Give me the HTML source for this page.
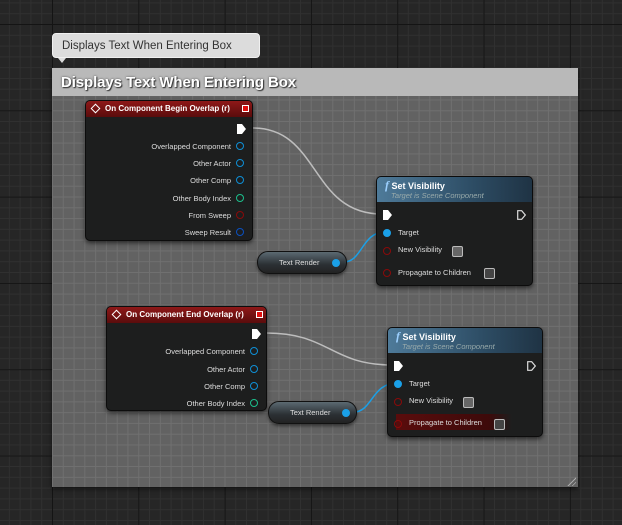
<!DOCTYPE html>
<html><head><meta charset="utf-8"><style>
*{margin:0;padding:0;box-sizing:border-box}
body{width:622px;height:525px;overflow:hidden;position:relative;font-family:"Liberation Sans",sans-serif;
background-color:#262626;
background-image:
linear-gradient(90deg,#141414 1px,transparent 1px),
linear-gradient(0deg,#141414 1px,transparent 1px),
linear-gradient(90deg,#303030 1px,transparent 1px),
linear-gradient(0deg,#303030 1px,transparent 1px);
background-size:86.3px 86.3px,86.3px 86.3px,10.79px 10.79px,10.79px 10.79px;
background-position:52px 25px,52px 25px,52px 25px,52px 25px;}
.abs{position:absolute}
.bubble{left:52px;top:33px;width:208px;height:25px;background:#dcdcdc;border-radius:4px;color:#333;font-size:11.5px;line-height:24px;padding-left:9px;border:1px solid #f0f0f0;white-space:nowrap}
.tri{left:58px;top:58px;width:0;height:0;border-left:4px solid transparent;border-right:4px solid transparent;border-top:5px solid #dcdcdc}
.comment{left:52px;top:68px;width:526px;height:419px;background-color:#626262;
background-image:linear-gradient(90deg,#707070 1px,transparent 1px),linear-gradient(0deg,#707070 1px,transparent 1px);
background-size:10.79px 10.79px,10.79px 10.79px;background-position:0 -43px,0 -43px;box-shadow:0 2px 4px rgba(0,0,0,.6)}
.chead{left:52px;top:68px;width:526px;height:28px;background:#b9b9b9;color:#fff;font-weight:bold;font-size:15px;line-height:29px;padding-left:9px;text-shadow:1px 1px 1px #333,0 0 2px #555;letter-spacing:-0.1px}
.node{position:absolute;background:#1d1e1e;border-radius:5px;border:1px solid #0c0c0c;box-shadow:0 2px 5px rgba(0,0,0,.6)}
.rh{position:absolute;left:0;right:0;top:0;height:16px;border-radius:4px 4px 0 0;background:linear-gradient(180deg,#8e1818,#5a0c0c);color:#fff;font-size:8px;font-weight:bold;line-height:16px;padding-left:19px;white-space:nowrap}
.bh{position:absolute;left:0;right:0;top:0;height:25px;border-radius:4px 4px 0 0;background:linear-gradient(90deg,#4e7a99 0%,#2e4e66 60%,#1f3344 100%);color:#fff;font-size:9px;font-weight:bold;padding-left:8px}
.lbl{position:absolute;color:#ddd;font-size:7.5px;white-space:nowrap}
.pin{position:absolute;width:8px;height:8px;border-radius:50%;border:1.5px solid}
.cb{position:absolute;width:11px;height:11px;border:1.5px solid #bbb;border-radius:2px;background:#444}
.pill{position:absolute;height:23px;border-radius:11px;background:linear-gradient(180deg,#5c6a72,#2b3034 60%,#222);border:1px solid #111;color:#ddd;font-size:7.5px;line-height:21px;box-shadow:0 2px 3px rgba(0,0,0,.5)}
.dia{position:absolute;left:6px;top:4px;width:7px;height:7px;border:1.5px solid #fff;transform:rotate(45deg)}
.sq{position:absolute;right:3px;top:4px;width:7px;height:7px;background:#e01010;border:1px solid #fff}
</style></head><body>
<div class="abs bubble">Displays Text When Entering Box</div>
<div class="abs tri"></div>
<div class="abs comment"></div>
<div class="abs chead">Displays Text When Entering Box</div>
<div class="abs" style="left:566px;top:476px;width:10px;height:10px;background:repeating-linear-gradient(135deg,transparent 0 2px,#aaa 2px 3px);clip-path:polygon(100% 0,100% 100%,0 100%)"></div>

<svg class="abs" style="left:0;top:0" width="622" height="525">
<path d="M253 128 C320 128 310 214 382 214" stroke="#bdbdbd" stroke-width="1.5" fill="none"/>
<path d="M344 262 C362 262 362 232 385 232" stroke="#1aa0e8" stroke-width="1.5" fill="none"/>
<path d="M266 333 C330 333 330 365 393 365" stroke="#bdbdbd" stroke-width="1.5" fill="none"/>
<path d="M354 412 C372 412 372 383 397 383" stroke="#1aa0e8" stroke-width="1.5" fill="none"/>
</svg>

<!-- Node 1 -->
<div class="node" style="left:85px;top:100px;width:168px;height:141px">
<div class="rh">On Component Begin Overlap (r)<span class="dia"></span><span class="sq"></span></div>
<svg class="abs" style="left:151px;top:23px" width="9" height="10"><path d="M0 0H5L9 5 5 10H0Z" fill="#fff"/></svg>
<div class="lbl" style="right:21px;top:41px">Overlapped Component</div><div class="pin" style="left:150px;top:41px;border-color:#0e8fd6"></div>
<div class="lbl" style="right:21px;top:58px">Other Actor</div><div class="pin" style="left:150px;top:58px;border-color:#0e8fd6"></div>
<div class="lbl" style="right:21px;top:75px">Other Comp</div><div class="pin" style="left:150px;top:75px;border-color:#0e8fd6"></div>
<div class="lbl" style="right:21px;top:93px">Other Body Index</div><div class="pin" style="left:150px;top:93px;border-color:#1cbf8c"></div>
<div class="lbl" style="right:21px;top:110px">From Sweep</div><div class="pin" style="left:150px;top:110px;border-color:#8a0a0a"></div>
<div class="lbl" style="right:21px;top:127px">Sweep Result</div><div class="pin" style="left:150px;top:127px;border-color:#0a50c0"></div>
</div>

<!-- Node 2 -->
<div class="node" style="left:376px;top:176px;width:157px;height:110px">
<div class="bh"><div style="line-height:15px;padding-top:1px"><i style="font-family:'Liberation Serif',serif;color:#9cd0ff;font-size:12px">f</i> Set Visibility</div><div style="font-size:7.5px;font-weight:normal;font-style:italic;color:#9aa;margin-top:-3px;padding-left:6px">Target is Scene Component</div></div>
<svg class="abs" style="left:6px;top:33px" width="9" height="10"><path d="M0 0H5L9 5 5 10H0Z" fill="#fff"/></svg>
<svg class="abs" style="left:140px;top:33px" width="9" height="10"><path d="M.7 .7H4.7L8.3 5 4.7 9.3H.7Z" fill="none" stroke="#ddd" stroke-width="1.2"/></svg>
<div class="pin" style="left:6px;top:52px;background:#1aa0e8;border-color:#1aa0e8"></div><div class="lbl" style="left:21px;top:51px">Target</div>
<div class="pin" style="left:6px;top:70px;border-color:#8a0a0a"></div><div class="lbl" style="left:21px;top:68px">New Visibility</div><div class="cb" style="left:75px;top:69px;background:#666"></div>
<div class="pin" style="left:6px;top:92px;border-color:#8a0a0a"></div><div class="lbl" style="left:21px;top:91px">Propagate to Children</div><div class="cb" style="left:107px;top:91px"></div>
</div>
<div class="pill" style="left:257px;top:251px;width:90px"><span style="margin-left:21px">Text Render</span><span style="position:absolute;right:6px;top:7px;width:8px;height:8px;border-radius:50%;background:#1aa0e8"></span></div>

<!-- Node 3 -->
<div class="node" style="left:106px;top:306px;width:161px;height:105px">
<div class="rh">On Component End Overlap (r)<span class="dia"></span><span class="sq"></span></div>
<svg class="abs" style="left:145px;top:22px" width="9" height="10"><path d="M0 0H5L9 5 5 10H0Z" fill="#fff"/></svg>
<div class="lbl" style="right:21px;top:40px">Overlapped Component</div><div class="pin" style="left:143px;top:40px;border-color:#0e8fd6"></div>
<div class="lbl" style="right:21px;top:58px">Other Actor</div><div class="pin" style="left:143px;top:58px;border-color:#0e8fd6"></div>
<div class="lbl" style="right:21px;top:75px">Other Comp</div><div class="pin" style="left:143px;top:75px;border-color:#0e8fd6"></div>
<div class="lbl" style="right:21px;top:92px">Other Body Index</div><div class="pin" style="left:143px;top:92px;border-color:#1cbf8c"></div>
</div>

<!-- Node 4 -->
<div class="node" style="left:387px;top:327px;width:156px;height:110px">
<div class="bh"><div style="line-height:15px;padding-top:1px"><i style="font-family:'Liberation Serif',serif;color:#9cd0ff;font-size:12px">f</i> Set Visibility</div><div style="font-size:7.5px;font-weight:normal;font-style:italic;color:#9aa;margin-top:-3px;padding-left:6px">Target is Scene Component</div></div>
<svg class="abs" style="left:6px;top:33px" width="9" height="10"><path d="M0 0H5L9 5 5 10H0Z" fill="#fff"/></svg>
<svg class="abs" style="left:139px;top:33px" width="9" height="10"><path d="M.7 .7H4.7L8.3 5 4.7 9.3H.7Z" fill="none" stroke="#ddd" stroke-width="1.2"/></svg>
<div class="pin" style="left:6px;top:52px;background:#1aa0e8;border-color:#1aa0e8"></div><div class="lbl" style="left:21px;top:51px">Target</div>
<div class="pin" style="left:6px;top:70px;border-color:#8a0a0a"></div><div class="lbl" style="left:21px;top:68px">New Visibility</div><div class="cb" style="left:75px;top:69px;background:#666"></div>
<div class="abs" style="left:8px;top:86px;width:116px;height:16px;background:linear-gradient(90deg,#5a0c0c,#3d0a0a 80%,transparent)"></div>
<div class="pin" style="left:6px;top:92px;border-color:#8a0a0a"></div><div class="lbl" style="left:21px;top:90px">Propagate to Children</div><div class="cb" style="left:106px;top:91px"></div>
</div>
<div class="pill" style="left:268px;top:401px;width:89px"><span style="margin-left:21px">Text Render</span><span style="position:absolute;right:6px;top:7px;width:8px;height:8px;border-radius:50%;background:#1aa0e8"></span></div>
</body></html>
